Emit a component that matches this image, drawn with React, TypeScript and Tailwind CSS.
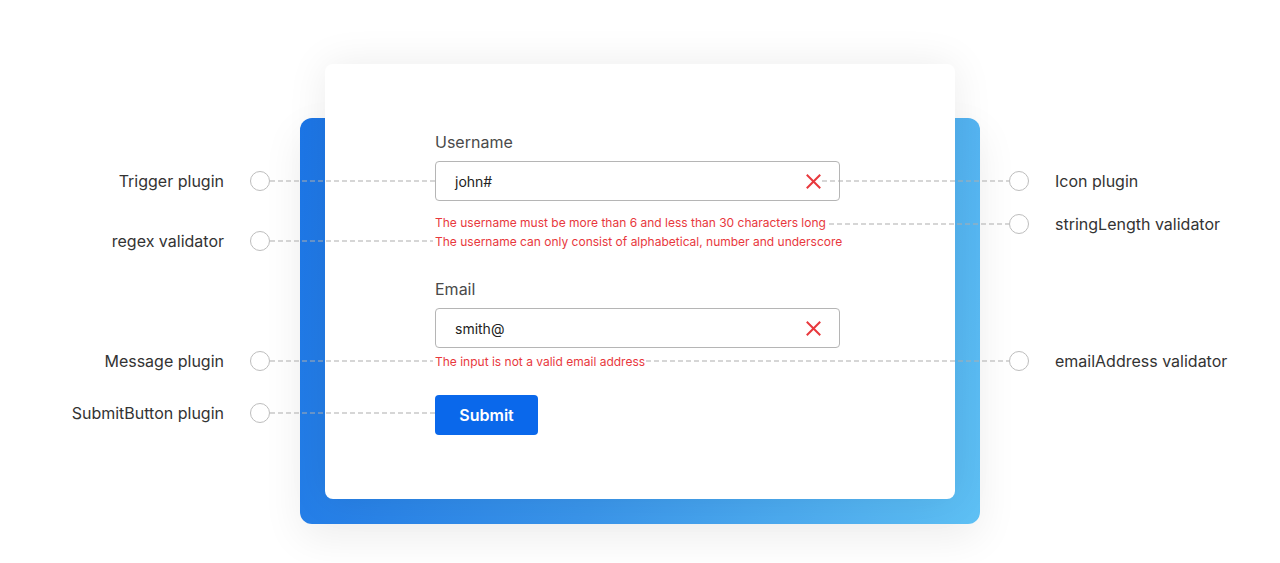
import React from "react";

const XIcon = () => (
  <svg width="15" height="15" viewBox="0 0 15 15" fill="none">
    <path d="M1.5 1.5L13.5 13.5M13.5 1.5L1.5 13.5" stroke="#e8383d" strokeWidth="2" strokeLinecap="square" />
  </svg>
);

const leftAnn = [
  { y: 181, label: "Trigger plugin", x2: 435 },
  { y: 241, label: "regex validator", x2: 433 },
  { y: 361, label: "Message plugin", x2: 433 },
  { y: 413, label: "SubmitButton plugin", x2: 435 },
];
const rightAnn = [
  { y: 181, label: "Icon plugin", x1: 822 },
  { y: 224, label: "stringLength validator", x1: 829 },
  { y: 361, label: "emailAddress validator", x1: 646 },
];

export default function App() {
  return (
    <div
      className="relative w-full h-[563px] overflow-hidden bg-white pt-[118px] pl-[300px]"
      style={{ fontFamily: "Inter, 'Noto Sans', sans-serif" }}
    >
      <div className="flex items-start w-[680px] h-[406px] rounded-[12px] bg-[linear-gradient(105deg,#1c75e6_0%,#3a95ea_50%,#5ec0f4_100%)] shadow-[0_14px_40px_rgba(0,0,0,0.07)]">
        <div className="-mt-[54px] ml-[25px] shrink-0 w-[630px] h-[435px] rounded-[8px] bg-white shadow-[0_0_40px_rgba(0,0,0,0.08)] pl-[110px] pt-[68px]">
          <div className="w-[405px] flex flex-col">
            <div className="text-[16px] leading-[20px] text-[#4a4a4a]">Username</div>
            <div className="mt-[9px] h-[40px] rounded-[4px] border border-[#b5b5b5] bg-white flex items-center pl-[19px] pr-[18px] justify-between">
              <span className="text-[14px] text-[#222]">john#</span>
              <XIcon />
            </div>
            <div className="mt-[12px] text-[12px] leading-[19px] text-[#e8383d] whitespace-nowrap">
              <div>The username must be more than 6 and less than 30 characters long</div>
              <div>The username can only consist of alphabetical, number and underscore</div>
            </div>
            <div className="mt-[28px] text-[16px] leading-[20px] text-[#4a4a4a]">Email</div>
            <div className="mt-[9px] h-[40px] rounded-[4px] border border-[#b5b5b5] bg-white flex items-center pl-[19px] pr-[18px] justify-between">
              <span className="text-[14px] text-[#222]">smith@</span>
              <XIcon />
            </div>
            <div className="mt-[4px] text-[12px] leading-[19px] text-[#e8383d] whitespace-nowrap">The input is not a valid email address</div>
            <button className="mt-[24px] w-[103px] h-[40px] rounded-[4px] bg-[#0a68eb] text-white text-[16px] font-semibold">
              Submit
            </button>
          </div>
        </div>
      </div>

      <svg className="absolute inset-0 pointer-events-none" width="1280" height="563">
        {leftAnn.map((a) => (
          <g key={a.label}>
            <line x1={270} y1={a.y} x2={a.x2} y2={a.y} stroke="#adadad" strokeWidth="1" strokeDasharray="5 3" />
            <circle cx={260} cy={a.y} r={9.5} fill="white" stroke="#bdbdbd" strokeWidth="1" />
          </g>
        ))}
        {rightAnn.map((a) => (
          <g key={a.label}>
            <line x1={a.x1} y1={a.y} x2={1009} y2={a.y} stroke="#adadad" strokeWidth="1" strokeDasharray="5 3" />
            <circle cx={1019} cy={a.y} r={9.5} fill="white" stroke="#bdbdbd" strokeWidth="1" />
          </g>
        ))}
      </svg>

      {leftAnn.map((a) => (
        <div
          key={a.label}
          className="absolute left-0 w-[224px] text-right text-[16px] leading-[20px] text-[#333]"
          style={{ top: a.y - 10 }}
        >
          {a.label}
        </div>
      ))}
      {rightAnn.map((a) => (
        <div
          key={a.label}
          className="absolute left-[1055px] text-[16px] leading-[20px] text-[#333] whitespace-nowrap"
          style={{ top: a.y - 10 }}
        >
          {a.label}
        </div>
      ))}
    </div>
  );
}
